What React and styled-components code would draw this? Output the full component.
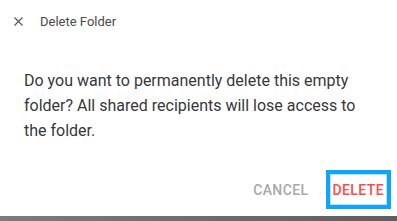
import React from 'react';
import styled, { createGlobalStyle } from 'styled-components';

const GlobalStyle = createGlobalStyle`
  html, body {
    margin: 0;
    padding: 0;
    background: linear-gradient(90deg, #7c7c7c, #5e5e5e);
    font-family: Roboto, "Liberation Sans", sans-serif;
  }
`;

const Dialog = styled.div`
  width: 397px;
  height: 216px;
  background: #fff;
  display: flex;
  flex-direction: column;
  box-sizing: border-box;
`;

const Header = styled.div`
  height: 42px;
  display: flex;
  align-items: center;
  padding-left: 13px;
  gap: 17px;
`;

const CloseButton = styled.button`
  width: 10px;
  height: 10px;
  padding: 0;
  border: 0;
  background: none;
  display: flex;
  align-items: center;
  justify-content: center;
  cursor: pointer;
`;

const Title = styled.h2`
  margin: 0;
  font-size: 13px;
  font-weight: 400;
  color: #4a4a4a;
`;

const Message = styled.p`
  margin: 26px 24px 0 24px;
  font-size: 16px;
  line-height: 25px;
  color: #383838;
`;

const Actions = styled.div`
  display: flex;
  justify-content: flex-end;
  align-items: center;
  gap: 10px;
  margin-top: 27px;
  padding-right: 6px;
`;

const ActionButton = styled.button`
  height: 39px;
  box-sizing: border-box;
  padding: 0 3px;
  border: 4px solid ${props => (props.$focused ? '#0fa4ff' : 'transparent')};
  box-shadow: ${props => (props.$focused ? 'inset 0 0 0 1px #b9e2ff' : 'none')};
  background: #fff;
  font-family: Roboto, "Liberation Sans", sans-serif;
  font-size: 14px;
  font-weight: 500;
  letter-spacing: 0.4px;
  color: ${props => props.$color};
  cursor: pointer;
`;

function CloseIcon() {
  return (
    <svg width="9" height="9" viewBox="0 0 9 9">
      <path d="M0.5 0.5 L8.5 8.5 M8.5 0.5 L0.5 8.5" stroke="#555" strokeWidth="1.1" fill="none" />
    </svg>
  );
}

function App() {
  return (
    <>
      <GlobalStyle />
      <Dialog>
        <Header>
          <CloseButton>
            <CloseIcon />
          </CloseButton>
          <Title>Delete Folder</Title>
        </Header>
        <Message>
          Do you want to permanently delete this empty folder? All shared recipients will lose access to the folder.
        </Message>
        <Actions>
          <ActionButton $color="#a9a9a9">CANCEL</ActionButton>
          <ActionButton $color="#ff4a4a" $focused>
            DELETE
          </ActionButton>
        </Actions>
      </Dialog>
    </>
  );
}

export default App;
